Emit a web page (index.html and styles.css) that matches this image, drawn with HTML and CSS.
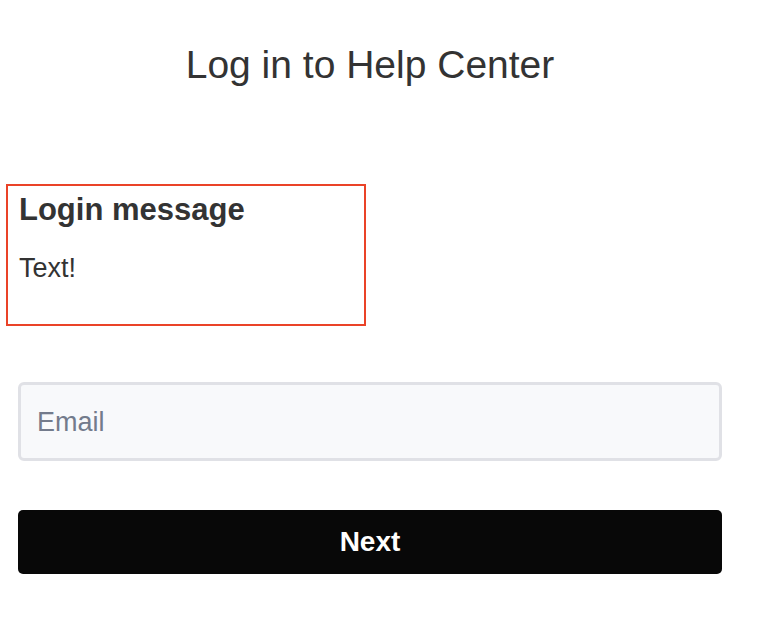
FILE: index.html
```html
<!DOCTYPE html>
<html lang="en">
<head>
  <meta charset="UTF-8" />
  <meta name="viewport" content="width=device-width, initial-scale=1.0"/>
  <title>Log in to Help Center</title>
  <link rel="stylesheet" href="styles.css">
</head>
<body>

<div class="login">
  <h1>Log in to Help Center</h1>

  <div class="login-message">
    <h2>Login message</h2>
    <p>Text!</p>
  </div>

  <form class="login-form" onsubmit="return false;">
    <input type="email" class="email-input" placeholder="Email" />
    <button type="submit" class="next-btn">Next</button>
  </form>
</div>

</body>
</html>
```

FILE: styles.css
```css
body {
  font-family: 'Liberation Sans', Arial, sans-serif;
  background: #fff;
  color: #333;
  margin: 0;
}
.login {
  width: 704px;
  padding: 0 18px;
}
h1 {
  text-align: center;
  font-size: 39px;
  font-weight: normal;
  margin: 43px 0 0;
  line-height: 44px;
}
.login-message {
  width: 335px;
  margin: 97px 0 0 -12px;
  padding: 7px 10px 40px 11px;
  border: 2px solid #ea4328;
}
.login-message h2 {
  font-size: 31px;
  margin: 0;
  line-height: 34px;
}
.login-message p {
  font-size: 27px;
  margin: 25px 0 0;
  line-height: 32px;
}
.login-form {
  margin-top: 56px;
}
.email-input {
  display: block;
  box-sizing: border-box;
  width: 100%;
  height: 79px;
  padding: 2px 16px 0;
  background: #f8f9fb;
  border: 3px solid #e0e1e6;
  border-radius: 6px;
  font-family: 'Liberation Sans', Arial, sans-serif;
  font-size: 27px;
  color: #333;
  outline: none;
}
.email-input::placeholder {
  color: #737b8c;
}
.next-btn {
  display: block;
  width: 100%;
  height: 64px;
  margin-top: 49px;
  background: #080808;
  color: #fff;
  border: none;
  border-radius: 5px;
  font-family: 'Liberation Sans', Arial, sans-serif;
  font-size: 28px;
  font-weight: bold;
}
```
